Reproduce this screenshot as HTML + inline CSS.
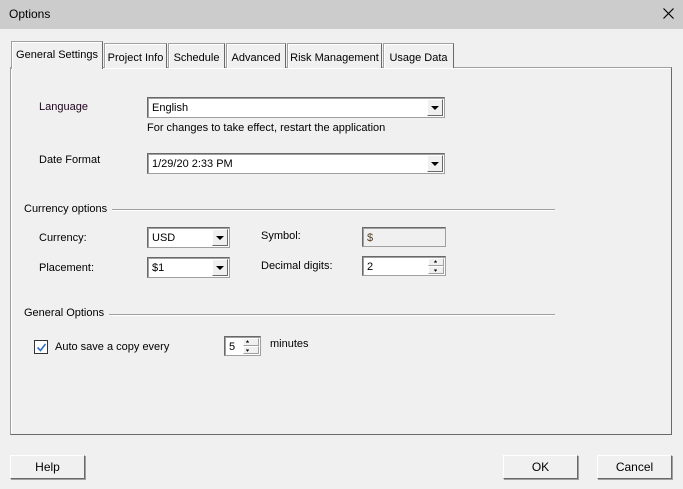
<!DOCTYPE html>
<html><head><meta charset="utf-8"><style>
*{box-sizing:border-box;margin:0;padding:0}
body{width:683px;height:489px;background:#f0f0f0;font-family:"Liberation Sans",sans-serif;font-size:11px;color:#000;position:relative;overflow:hidden}
.a{position:absolute;white-space:nowrap}
.title{left:0;top:0;width:683px;height:29px;background:#cccccc}
.tab{position:absolute;top:43px;height:25px;border:1px solid #a0a0a0;border-bottom:none;background:#f0f0f0;border-right-color:#696969;text-align:center;padding-top:8px;box-shadow:inset 1px 1px 0 #fff;white-space:nowrap}
.panel{left:10px;top:67px;width:662px;height:368px;border:1px solid #a0a0a0;border-right-color:#696969;border-bottom-color:#696969;box-shadow:inset 1px 1px 0 #fff}
.combo{position:absolute;background:#fff;border:1px solid #a0a0a0;border-top-color:#696969;border-left-color:#696969;box-shadow:inset 1px 1px 0 #a0a0a0;padding:4px 0 0 4px;white-space:nowrap}
.combo .btn{position:absolute;right:1px;top:1px;bottom:1px;width:16px;background:#f0f0f0;border:1px solid #fff;border-right-color:#696969;border-bottom-color:#696969}
.combo .btn:after{content:"";position:absolute;left:3px;top:6px;border-left:4px solid transparent;border-right:4px solid transparent;border-top:4px solid #000}
.line{height:2px;background:#a0a0a0;border-bottom:1px solid #fff}
.button{position:absolute;height:24px;width:75px;border:1px solid #fff;border-right-color:#696969;border-bottom-color:#696969;box-shadow:1px 1px 0 #a0a0a0;text-align:center;padding-top:4px;background:#f0f0f0;font-size:12px}
.spin{position:absolute;right:1px;width:16px;height:8px;background:#f0f0f0;border:1px solid #fff;border-right-color:#a0a0a0;border-bottom-color:#a0a0a0}
</style></head><body>
<div class="a title"></div>
<div class="a" style="left:9px;top:7px;font-size:12px">Options</div>
<svg class="a" style="left:663px;top:8px" width="11" height="11"><path d="M0.5 0.5L10.5 10.5M10.5 0.5L0.5 10.5" stroke="#000" stroke-width="1.2"/></svg>

<div class="a panel"></div>
<div class="tab" style="left:104px;width:63px">Project Info</div>
<div class="tab" style="left:168px;width:57px">Schedule</div>
<div class="tab" style="left:226px;width:60px">Advanced</div>
<div class="tab" style="left:287px;width:95px">Risk Management</div>
<div class="tab" style="left:383px;width:71px">Usage Data</div>
<div class="tab" style="left:11px;top:41px;height:28px;width:92px;padding-top:7px;z-index:2">General Settings</div>

<div class="a" style="left:39px;top:101px;color:#200020">Language</div>
<div class="combo" style="left:147px;top:97px;width:298px;height:21px">English<div class="btn"></div></div>
<div class="a" style="left:147px;top:122px">For changes to take effect, restart the application</div>
<div class="a" style="left:39px;top:154px">Date Format</div>
<div class="combo" style="left:147px;top:153px;width:298px;height:21px">1/29/20 2:33 PM<div class="btn"></div></div>

<div class="a" style="left:24px;top:203px">Currency options</div>
<div class="a line" style="left:112px;top:209px;width:443px"></div>
<div class="a" style="left:39px;top:232px">Currency:</div>
<div class="combo" style="left:147px;top:227px;width:83px;height:21px">USD<div class="btn"></div></div>
<div class="a" style="left:261px;top:230px">Symbol:</div>
<div class="combo" style="left:362px;top:227px;width:84px;height:20px;background:#f0f0f0;color:#5a4020">$</div>
<div class="a" style="left:39px;top:262px">Placement:</div>
<div class="combo" style="left:147px;top:257px;width:83px;height:21px">$1<div class="btn"></div></div>
<div class="a" style="left:261px;top:260px">Decimal digits:</div>
<div class="combo" style="left:362px;top:256px;width:84px;height:20px">2<div class="spin" style="top:1px"></div><div class="spin" style="top:9px"></div></div>
<svg class="a" style="left:432px;top:259px" width="8" height="14"><path d="M2 3h3M3 2h1M2 11h3M3 12h1" stroke="#000"/></svg>

<div class="a" style="left:24px;top:307px">General Options</div>
<div class="a line" style="left:109px;top:314px;width:446px"></div>
<div class="a" style="left:34px;top:340px;width:14px;height:14px;border:1px solid #333;background:#fff"></div>
<svg class="a" style="left:36px;top:342px" width="11" height="11"><path d="M1.5 5.5L4.5 8.5L9.5 2" stroke="#3070c0" stroke-width="1.6" fill="none"/></svg>
<div class="a" style="left:55px;top:341px">Auto save a copy every</div>
<div class="combo" style="left:224px;top:336px;width:37px;height:20px">5<div class="spin" style="top:1px"></div><div class="spin" style="top:9px"></div></div>
<svg class="a" style="left:244px;top:339px" width="8" height="14"><path d="M2 3h3M3 2h1M2 11h3M3 12h1" stroke="#000"/></svg>
<div class="a" style="left:270px;top:338px">minutes</div>

<div class="button" style="left:10px;top:455px">Help</div>
<div class="button" style="left:503px;top:455px">OK</div>
<div class="button" style="left:597px;top:455px">Cancel</div>
</body></html>
